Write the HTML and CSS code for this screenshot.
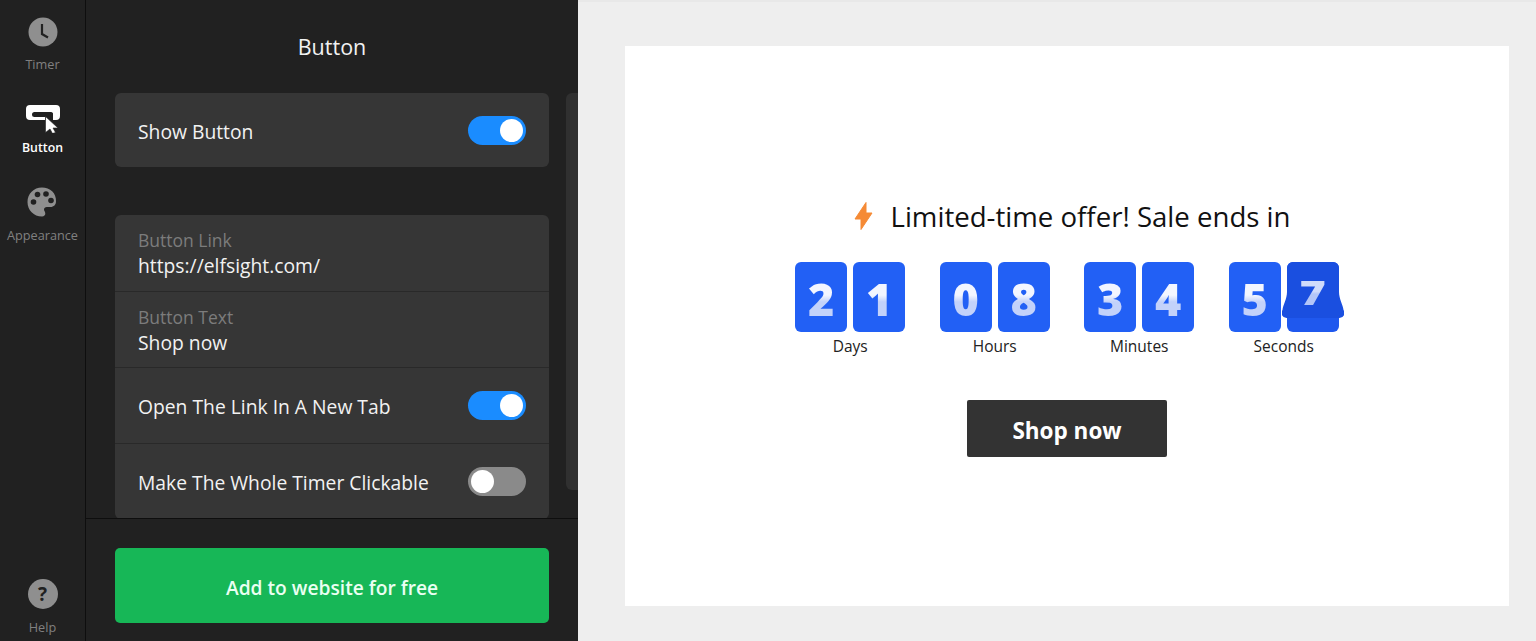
FILE: index.html
```html
<!DOCTYPE html>
<html lang="en">
<head>
  <meta charset="UTF-8">
  <meta name="viewport" content="width=device-width, initial-scale=1.0">
  <title>Countdown Timer Editor</title>
  <link rel="stylesheet" href="styles.css">
</head>
<body>
  <div class="app">
    <!-- Left icon rail -->
    <nav class="rail">
      <a class="rail-item rail-timer">
        <svg width="30" height="30" viewBox="0 0 30 30"><circle cx="15" cy="15" r="14.5" fill="#8f8f8f"/><path d="M14 7v10l6 3.500" fill="none" stroke="#212121" stroke-width="2.200"/></svg>
        <span>Timer</span>
      </a>
      <a class="rail-item rail-button active">
        <svg width="36" height="28" viewBox="0 0 36 28"><path d="M5 0H31a4 4 0 0 1 4 4v7a4 4 0 0 1-4 4h-3V9.500a2 2 0 0 0-2-2.500H9.500a2.500 2.500 0 0 0 0 5H20v3H5a4 4 0 0 1-4-4V4a4 4 0 0 1 4-4z" fill="#fff"/><path d="M20.500 11.500L33 23H28L30.500 27.500 27.500 28.500 25 24 20.500 27.500z" fill="#fff" stroke="#212121" stroke-width=".6"/></svg>
        <span>Button</span>
      </a>
      <a class="rail-item rail-appearance">
        <svg width="30" height="30" viewBox="0 0 30 30"><path d="M15 .5C6.700.5.500 6.700.500 15S6.700 29.500 15 29.500c2.200 0 3.300-1.400 3.300-3 0-1.900-1.300-2.500-1.300-4 0-1.500 1.200-2.500 2.800-2.500h3.600c3.500 0 5.600-2.500 5.600-5.500C29.500 6 23 .5 15 .5z" fill="#8f8f8f"/><circle cx="6.500" cy="15" r="2.800" fill="#212121"/><circle cx="10.500" cy="7.500" r="2.800" fill="#212121"/><circle cx="19" cy="7" r="2.800" fill="#212121"/><circle cx="24" cy="13.500" r="2.800" fill="#212121"/></svg>
        <span>Appearance</span>
      </a>
      <a class="rail-item rail-help">
        <span class="help-icon">?</span>
        <span>Help</span>
      </a>
    </nav>

    <!-- Settings panel -->
    <section class="panel">
      <h1 class="panel-title">Button</h1>
      <div class="panel-body">
        <div class="settings">
          <div class="card">
            <div class="row row-toggle row-first">
              <span class="row-text">Show Button</span>
              <span class="toggle on"></span>
            </div>
          </div>
          <div class="card card-clip">
            <div class="row row-field">
              <label>Button Link</label>
              <span>https://elfsight.com/</span>
            </div>
            <div class="row row-field">
              <label>Button Text</label>
              <span>Shop now</span>
            </div>
            <div class="row row-toggle">
              <span class="row-text">Open The Link In A New Tab</span>
              <span class="toggle on"></span>
            </div>
            <div class="row row-toggle">
              <span class="row-text">Make The Whole Timer Clickable</span>
              <span class="toggle"></span>
            </div>
          </div>
        </div>
        <div class="scrollbar"></div>
      </div>
      <div class="panel-footer">
        <button class="add-btn">Add to website for free</button>
      </div>
    </section>

    <!-- Widget preview -->
    <main class="preview">
      <div class="widget">
        <div class="headline">
          <svg width="20" height="28" viewBox="0 0 20 28"><path d="M13 .5L2 17H8L8 27.500 19 11H13z" fill="#f58a35" stroke="#f58a35" stroke-width="1" stroke-linejoin="round"/></svg>
          <span>Limited-time offer! Sale ends in</span>
        </div>
        <div class="countdown">
          <div class="unit">
            <div class="digits"><b class="digit"><i>2</i></b><b class="digit"><i>1</i></b></div>
            <span>Days</span>
          </div>
          <div class="unit">
            <div class="digits"><b class="digit"><i>0</i></b><b class="digit"><i>8</i></b></div>
            <span>Hours</span>
          </div>
          <div class="unit">
            <div class="digits"><b class="digit"><i>3</i></b><b class="digit"><i>4</i></b></div>
            <span>Minutes</span>
          </div>
          <div class="unit">
            <div class="digits"><b class="digit"><i>5</i></b><b class="digit digit-flip"><svg class="flap" width="62" height="56" viewBox="0 0 62 56"><path d="M11 0h40a6 6 0 0 1 6 6v24c0 7 4 13 4.500 18a5 5 0 0 1-4 8H4.500a5 5 0 0 1-4-8C1 43 5 37 5 30V6a6 6 0 0 1 6-6z" fill="#1a4fe0"/></svg><i>7</i></b></div>
            <span>Seconds</span>
          </div>
        </div>
        <a class="shop-btn">Shop now</a>
      </div>
    </main>
  </div>
</body>
</html>
```

FILE: styles.css
```css
* {
  box-sizing: border-box;
}

html, body {
  height: 100%;
  margin: 0;
  overflow: hidden;
}

body {
  font-family: 'Open Sans', 'Noto Sans', sans-serif;
  background: #eeeeee;
}

.app {
  display: flex;
  height: 641px;
}

/* rail */
.rail {
  width: 86px;
  flex-shrink: 0;
  background: #212121;
  border-right: 1px solid #0e0e0e;
  display: flex;
  flex-direction: column;
  align-items: center;
  padding-top: 17px;
}

.rail-item {
  display: flex;
  flex-direction: column;
  align-items: center;
  color: #808080;
  font-size: 12.700px;
  line-height: 16px;
}

.rail-item svg {
  display: block;
}

.rail-timer span {
  margin-top: 9px;
}

.rail-button {
  margin-top: 33px;
  color: #ffffff;
  font-size: 12.300px;
  font-weight: 600;
}

.rail-button span {
  margin-top: 7px;
}

.rail-appearance {
  margin-top: 31px;
}

.rail-appearance span {
  margin-top: 10px;
}

.rail-help {
  margin-top: auto;
  margin-bottom: 6px;
}

.help-icon {
  width: 30px;
  height: 30px;
  border-radius: 50%;
  background: #8f8f8f;
  color: #212121;
  font-weight: 700;
  font-size: 19px;
  line-height: 30px;
  text-align: center;
  margin-bottom: 10px;
}

/* settings panel */
.panel {
  width: 492px;
  flex-shrink: 0;
  background: #212121;
  display: flex;
  flex-direction: column;
  color: #ffffff;
}

.panel-title {
  margin: 0;
  height: 93px;
  padding-top: 32px;
  font-size: 21.500px;
  line-height: 30px;
  font-weight: 400;
  text-align: center;
  color: #f2f2f2;
}

.panel-body {
  flex: 1;
  min-height: 0;
  display: flex;
  overflow: hidden;
  padding-left: 29px;
}

.settings {
  width: 434px;
  flex-shrink: 0;
}

.card {
  background: #363636;
  border-radius: 6px;
}

.card-clip {
  margin-top: 48px;
}

.row {
  height: 76px;
  padding: 0 23px;
  border-top: 1px solid #292929;
  font-size: 19.300px;
  color: #f2f2f2;
}

.row:first-child {
  border-top: none;
}

.row-first {
  height: 74px;
}

.row-toggle {
  display: flex;
  align-items: center;
  justify-content: space-between;
}

.row-text {
  padding-top: 2px;
}

.row-field {
  display: flex;
  flex-direction: column;
  padding-top: 12px;
  line-height: 26px;
}

.row-field label {
  color: #7c7c7c;
  font-size: 17.500px;
  line-height: 26px;
}

.toggle {
  position: relative;
  width: 58px;
  height: 29px;
  border-radius: 15px;
  background: #8a8a8a;
}

.toggle.on {
  background: #1a8cff;
}

.toggle::after {
  content: '';
  position: absolute;
  top: 3px;
  left: 3px;
  width: 23px;
  height: 23px;
  border-radius: 50%;
  background: #ffffff;
}

.toggle.on::after {
  left: auto;
  right: 3px;
}

.scrollbar {
  width: 12px;
  height: 397px;
  margin-left: 17px;
  background: #303030;
  border-radius: 6px 0 0 6px;
}

.panel-footer {
  height: 123px;
  flex-shrink: 0;
  border-top: 1px solid #0e0e0e;
  padding: 29px 28px 0 29px;
  background: #212121;
}

.add-btn {
  display: block;
  width: 434px;
  height: 75px;
  padding-top: 4px;
  border: none;
  border-radius: 5px;
  background: #17b757;
  color: #eafff2;
  font-family: inherit;
  font-size: 19.200px;
  font-weight: 600;
}

/* preview */
.preview {
  flex: 1;
  padding: 46px 27px 35px 47px;
  border-top: 2px solid #e8e8e8;
}

.widget {
  height: 560px;
  margin-top: -2px;
  background: #ffffff;
  display: flex;
  flex-direction: column;
  align-items: center;
  padding-top: 150px;
}

.headline {
  display: flex;
  align-items: center;
  gap: 18px;
  height: 40px;
  margin-left: 9px;
  font-size: 27.600px;
  color: #111111;
}

.countdown {
  display: flex;
  gap: 34.500px;
  margin-top: 26px;
}

.unit {
  display: flex;
  flex-direction: column;
  align-items: center;
  font-size: 15.500px;
  line-height: 28px;
  color: #222222;
}

.digits {
  display: flex;
  gap: 6px;
}

.digit {
  position: relative;
  width: 52px;
  height: 70px;
  padding-top: 3px;
  border-radius: 6px;
  background: #2260f5;
  display: flex;
  align-items: center;
  justify-content: center;
}

.digit i {
  position: relative;
  font-style: normal;
  font-size: 45px;
  font-weight: 800;
  line-height: 67px;
  background: linear-gradient(180deg, #f3f6ff 45%, #c3d2fa 55%);
  -webkit-background-clip: text;
  background-clip: text;
  color: transparent;
}

.digit-flip {
  background: #1f58ee;
}

.digit-flip i {
  top: -7px;
  transform: scaleY(0.75);
  background: linear-gradient(180deg, #cfdbfb 50%, #b3c6f8 55%);
  -webkit-background-clip: text;
  background-clip: text;
}

.flap {
  position: absolute;
  top: 0;
  left: -4.500px;
}

.shop-btn {
  margin-top: 40px;
  width: 200px;
  height: 57px;
  padding-top: 2px;
  border-radius: 2px;
  background: #333333;
  color: #ffffff;
  font-size: 22.500px;
  font-weight: 700;
  line-height: 57px;
  text-align: center;
}
```
